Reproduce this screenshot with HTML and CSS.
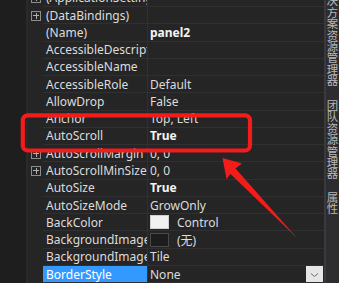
FILE: index.html
```html
<!DOCTYPE html>
<html>
<head>
<meta charset="utf-8">
<link rel="stylesheet" href="styles.css">
</head>
<body>
<div class="app">
  <div class="side"></div>
  <div class="grid">
    <div class="rows">
      <div class="row"><div class="gutter"><span class="box"></span></div><div class="name">(ApplicationSettings)</div><div class="value"></div></div>
      <div class="row"><div class="gutter"><span class="box"></span></div><div class="name">(DataBindings)</div><div class="value"></div></div>
      <div class="row"><div class="gutter"></div><div class="name">(Name)</div><div class="value bold">panel2</div></div>
      <div class="row"><div class="gutter"></div><div class="name">AccessibleDescription</div><div class="value"></div></div>
      <div class="row"><div class="gutter"></div><div class="name">AccessibleName</div><div class="value"></div></div>
      <div class="row"><div class="gutter"></div><div class="name">AccessibleRole</div><div class="value">Default</div></div>
      <div class="row"><div class="gutter"></div><div class="name">AllowDrop</div><div class="value">False</div></div>
      <div class="row"><div class="gutter"></div><div class="name">Anchor</div><div class="value">Top, Left</div></div>
      <div class="row"><div class="gutter"></div><div class="name">AutoScroll</div><div class="value bold">True</div></div>
      <div class="row"><div class="gutter"><span class="box"></span></div><div class="name">AutoScrollMargin</div><div class="value">0, 0</div></div>
      <div class="row"><div class="gutter"><span class="box"></span></div><div class="name">AutoScrollMinSize</div><div class="value">0, 0</div></div>
      <div class="row"><div class="gutter"></div><div class="name">AutoSize</div><div class="value bold">True</div></div>
      <div class="row"><div class="gutter"></div><div class="name">AutoSizeMode</div><div class="value">GrowOnly</div></div>
      <div class="row"><div class="gutter"></div><div class="name">BackColor</div><div class="value"><span class="swatch light"></span>Control</div></div>
      <div class="row"><div class="gutter"></div><div class="name">BackgroundImage</div><div class="value"><span class="swatch dark"></span>(无)</div></div>
      <div class="row"><div class="gutter"></div><div class="name">BackgroundImageLayout</div><div class="value">Tile</div></div>
      <div class="row selected"><div class="gutter"></div><div class="name">BorderStyle</div><div class="value"><span class="val-text">None</span><span class="drop"><svg width="9" height="6" viewBox="0 0 9 6"><path d="M1 1.5 L4.5 4.5 L8 1.5" fill="none" stroke="#6b6b6b" stroke-width="1"/></svg></span></div></div>
    </div>
  </div>
  <div class="divider"></div>
  <div class="tabs">
    <div class="tab t1">解决方案资源管理器</div>
    <div class="tab">团队资源管理器</div>
    <div class="tab">属性</div>
  </div>
</div>
<svg class="annot" width="339" height="283" viewBox="0 0 339 283">
  <rect x="22.8" y="115.3" width="227.2" height="35.2" rx="5" ry="5" fill="none" stroke="#f41c1a" stroke-width="4.2"/>
  <polygon points="222.5,158 242,163.5 235.5,168.5 297,238 230.5,174 226.5,179" fill="#f41c1a"/>
</svg>
</body>
</html>
```
FILE: styles.css
```css
html, body {
  margin: 0;
  padding: 0;
}
body {
  width: 339px;
  height: 283px;
  overflow: hidden;
  background: #1e1e1e;
  font-family: "Noto Sans", "Noto Sans CJK SC", sans-serif;
  font-size: 12px;
  color: #dcdcdc;
  position: relative;
}
.app {
  display: flex;
  height: 283px;
}
.side {
  width: 26px;
  background: #1e1e1e;
  border-right: 2px solid #2a2a2c;
}
.grid {
  flex: 1;
  background: #252526;
  overflow: hidden;
}
.rows {
  margin-top: -10.3px;
}
.row {
  display: grid;
  grid-template-columns: 15px 105px 1fr;
  height: 17.27px;
}
.gutter {
  display: flex;
  align-items: center;
  padding-left: 3px;
}
.box {
  width: 8px;
  height: 8px;
  border: 1px solid #8c8c8c;
  position: relative;
}
.box::before, .box::after {
  content: "";
  position: absolute;
  background: #b0b0b0;
}
.box::before {
  left: 1px; right: 1px; top: 3.5px; height: 1px;
}
.box::after {
  top: 1px; bottom: 1px; left: 3.5px; width: 1px;
}
.name {
  border-bottom: 1px solid #303033;
  border-right: 1px solid #303033;
  padding-left: 3px;
  white-space: nowrap;
  overflow: hidden;
  display: flex;
  align-items: center;
}
.value {
  border-bottom: 1px solid #303033;
  padding-left: 2px;
  white-space: nowrap;
  overflow: hidden;
  display: flex;
  align-items: center;
}
.bold {
  font-weight: bold;
  color: #f4f4f4;
}
.swatch {
  width: 17px;
  height: 12px;
  border: 1px solid #555;
  margin-right: 8px;
  flex: none;
}
.swatch.light {
  background: #f0f0f0;
  border-color: #d0d0d0;
}
.swatch.dark {
  background: #1c1c1c;
  border-color: #4a4a4a;
}
.selected .name {
  background: #3399ff;
  color: #ffffff;
}
.val-text {
  flex: 1;
}
.drop {
  width: 17px;
  height: 17px;
  background: #e6e6e6;
  margin-right: 1px;
  display: flex;
  align-items: center;
  justify-content: center;
  flex: none;
  align-self: flex-start;
  margin-top: 0.5px;
}
.divider {
  width: 2px;
  background: #3a3a3e;
}
.tabs {
  width: 13px;
  background: #2d2d30;
  display: flex;
  flex-direction: column;
  align-items: center;
  gap: 13px;
  overflow: hidden;
}
.tab {
  writing-mode: vertical-rl;
  font-family: "Noto Sans CJK SC", sans-serif;
  font-size: 11.4px;
  line-height: 12px;
  color: #b8b8b8;
  flex: none;
}
.t1 {
  margin-top: -16px;
}
.annot {
  position: absolute;
  left: 0;
  top: 0;
  pointer-events: none;
}
```
